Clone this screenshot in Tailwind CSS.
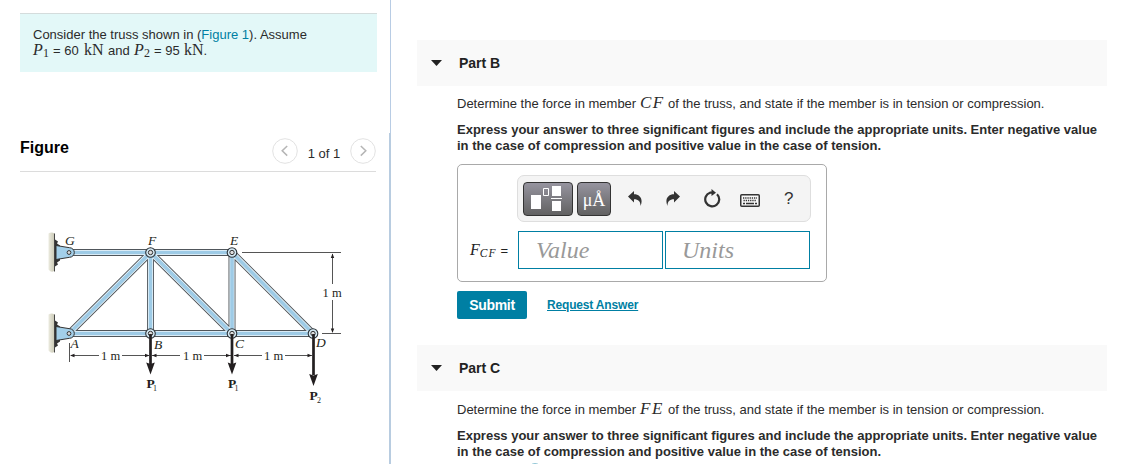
<!DOCTYPE html>
<html lang="en">
<head>
    <meta charset="UTF-8">
    <meta name="viewport" content="width=device-width, initial-scale=1.0">
    <title>Truss Problem</title>
    <script src="https://cdn.jsdelivr.net/npm/@tailwindcss/browser@4"></script>
</head>
<body class="bg-white w-[1130px] h-[464px] overflow-hidden flex font-['Liberation_Sans',Arial,sans-serif] text-[13px] leading-4 text-[#2b2b2b]">

    <!-- Left column -->
    <div class="w-[389px] shrink-0 pl-5 pt-[13px]">
        <div class="w-[357px] h-[59px] bg-[#e3f8f8] border-t border-[#d4dcdc] pl-[13px] pt-[13px] whitespace-nowrap">
            <p class="h-4">Consider the truss shown in (<a class="text-[#007fa3]">Figure 1</a>). Assume</p>
            <p class="h-4 -mt-px flex items-baseline leading-4"><span class="font-['Liberation_Serif',serif] italic text-[16px] w-[9px]">P</span><span class="font-['Liberation_Serif',serif] text-[12px] relative top-[2px] w-[11px] pl-[1px]">1</span><span class="w-[31px] whitespace-pre">= 60 </span><span class="font-['Liberation_Serif',serif] text-[16px] w-[24px]">kN</span><span class="w-[26px]">and</span><span class="font-['Liberation_Serif',serif] italic text-[16px] w-[9px]">P</span><span class="font-['Liberation_Serif',serif] text-[12px] relative top-[2px] w-[11px] pl-[1px]">2</span><span class="w-[30px] whitespace-pre">= 95 </span><span class="font-['Liberation_Serif',serif] text-[16px]">kN</span><span>.</span></p>
        </div>

        <div class="mt-[65px] w-[356px] h-[35px] border-b border-[#dcdcdc] flex justify-between">
            <h2 class="text-[16px] leading-5 font-bold text-black mt-px">Figure</h2>
            <div class="flex items-start mt-[1px]">
                <svg class="w-[26px] h-[26px]" viewBox="0 0 26 26" fill="none"><circle cx="13" cy="13" r="12.3" stroke="#e2e2e2"/><path d="M15.2 8l-5 4.8 5 4.8" stroke="#b5b5b5" stroke-width="1.5"/></svg>
                <span class="w-[52px] text-center mt-2">1 of 1</span>
                <svg class="w-[26px] h-[26px]" viewBox="0 0 26 26" fill="none"><circle cx="13" cy="13" r="12.3" stroke="#e2e2e2"/><path d="M10.8 8l5 4.8-5 4.8" stroke="#b5b5b5" stroke-width="1.5"/></svg>
            </div>
        </div>

        <!-- Truss diagram -->
        <svg class="mt-12 ml-5 w-[320px] h-[190px]" viewBox="40 220 320 190" font-family="Liberation Serif, serif" fill="#231f20">
            <defs>
                <linearGradient id="wall" x1="0" x2="1"><stop offset="0" stop-color="#ecebdf"/><stop offset="1" stop-color="#c9c8b5"/></linearGradient>
                <path id="members" d="M69 252.5H232M69 333.5H313M150.5 252.5V333.5M232 252.5V333.5M69 333.5L150.5 252.5L232 333.5M232 252.5L313 333.5"/>
                <g id="support">
                    <path d="M48.500 -19Q51.500 -21 54.500 -19V18Q51.500 21 48.500 17Z" fill="url(#wall)"/>
                    <path d="M54.500 -19V19" stroke="#444"/>
                    <path d="M55 -13L58 -11L57 -9L60 -7V8L57 10L58 12L55 14Z" fill="#333"/>
                    <path d="M56 -7L69.500 -4.800A4.800 4.800 0 0 1 69.500 4.800L56 7Z" fill="#a3cfe9" stroke="#333"/>
                </g>
                <g id="pin"><circle r="4.800" fill="#d5eaf5" stroke="#2d3338" stroke-width="1.100"/><circle r="2.200" fill="#ddd" stroke="#333"/></g>
            </defs>
            <use href="#members" fill="none" stroke="#50565b" stroke-width="7"/>
            <use href="#members" fill="none" stroke="#ecf6fb" stroke-width="5.200"/>
            <use href="#members" fill="none" stroke="#9ecbe6" stroke-width="3.600"/>
            <use href="#support" y="252.500"/>
            <use href="#support" y="333.500"/>
            <g fill="#ddd" stroke="#333"><circle cx="69" cy="252.500" r="1.900"/><circle cx="69" cy="333.500" r="1.900"/></g>
            <!-- dimension lines -->
            <g stroke="#555" fill="none">
                <path d="M69.500 343V362M242 252.500H341M322 333.500H341M332.500 254V284M332.500 300V332"/>
                <path d="M71 355.500H99M122 355.500H149M152 355.500H180M204 355.500H231M234 355.500H262M285 355.500H312"/>
            </g>
            <path d="M70 355.500l4.500-1.700v3.400zM149.500 355.500l-4.500-1.700v3.400zM152 355.500l4.500-1.700v3.400zM230.500 355.500l-4.500-1.700v3.400zM234 355.500l4.500-1.700v3.400zM312 355.500l-4.500-1.700v3.400zM332.500 253.500l-1.700 4.500h3.400zM332.500 333l-1.700-4.500h3.400z"/>
            <use href="#pin" x="150.500" y="252.500"/>
            <use href="#pin" x="232" y="252.500"/>
            <use href="#pin" x="150.500" y="333.500"/>
            <use href="#pin" x="232" y="333.500"/>
            <use href="#pin" x="313" y="333.500"/>
            <!-- loads -->
            <path d="M150.500 334V364M232 334V364M313.500 334V375" stroke="#231f20" stroke-width="2.700"/>
            <path d="M150.500 374.500l-4.300-12 4.300 1.500 4.300-1.500zM232 374.500l-4.300-12 4.300 1.500 4.300-1.500zM313.500 386l-4.300-12 4.300 1.500 4.300-1.500z"/>
            <g font-size="13.500" font-style="italic">
                <text x="65" y="244.500">G</text><text x="148" y="245">F</text><text x="230" y="245">E</text>
                <text x="70.500" y="347.500">A</text><text x="154" y="349">B</text><text x="235" y="347.500">C</text><text x="316" y="347">D</text>
            </g>
            <g font-size="12.500">
                <text x="101" y="360">1 m</text><text x="183" y="360">1 m</text><text x="264" y="360">1 m</text><text x="322.500" y="297">1 m</text>
            </g>
            <g font-size="13.500" font-weight="bold">
                <text x="146.500" y="387.500">P</text><text x="228" y="387.500">P</text><text x="309.500" y="399.500">P</text>
            </g>
            <g font-size="8"><text x="153" y="391">1</text><text x="234.500" y="391">1</text><text x="317" y="403">2</text></g>
        </svg>
    </div>

    <!-- Column divider -->
    <div class="w-[2px] shrink-0 flex flex-col items-end">
        <div class="w-px h-[133px] bg-[#b8cce4]"></div>
        <div class="w-[2px] flex-1 bg-[#b8cce0]"></div>
    </div>

    <!-- Right column -->
    <div class="ml-[26px] w-[690px] shrink-0 pt-10 whitespace-nowrap">
        <div class="h-[46px] bg-[#f9f9f9] flex items-center pl-[14px]">
            <svg class="w-[11px] h-[6px]" viewBox="0 0 11 6"><path d="M0 0h11L5.500 6z" fill="#222"/></svg>
            <h3 class="ml-[17px] text-[14px] font-bold text-[#222]">Part B</h3>
        </div>
        <div class="pl-10">
            <p class="mt-[9px] h-4 flex items-baseline"><span class="w-[183px]">Determine the force in member</span><span class="font-['Liberation_Serif',serif] italic text-[17px] tracking-[1.5px] w-[28px]">CF</span><span>of the truss, and state if the member is in tension or compression.</span></p>
            <p class="mt-[11px] font-bold">Express your answer to three significant figures and include the appropriate units. Enter negative value<br>in the case of compression and positive value in the case of tension.</p>

            <!-- Answer box -->
            <div class="mt-[10px] w-[370px] h-[118px] border border-[#a9a9a9] rounded-[5px] pt-[10px] pl-[10px]">
                <div class="ml-[49px] w-[294px] h-[47px] bg-[#f4f4f4] border border-[#dedede] rounded-[7px] flex items-center pl-[5px]">
                    <div class="w-[50px] h-[34px] rounded-[4px] border border-[#333] bg-linear-to-b from-[#96949f] to-[#626262]">
                        <svg class="w-12 h-8" viewBox="0 0 48 32"><path d="M7 12h10v14H7zM28 3h9v10h-9zM28 18h9v10h-9zM27 15h11v1h-11z" fill="#fff"/><path d="M19.500 5.500h5v7h-5z" fill="none" stroke="#fff"/></svg>
                    </div>
                    <div class="ml-1 w-[34px] h-[34px] rounded-[4px] border border-[#333] bg-linear-to-b from-[#96949f] to-[#626262] text-white text-center font-['Liberation_Serif',serif] text-[18px] leading-[34px]">μÅ</div>
                    <svg class="ml-[17px] w-[14px] h-[15px]" viewBox="0 0 14 15"><path d="M0 5.500L6 0V3.200C12 3.200 15.500 8 12.500 15C12.500 10.500 10.500 8.300 6 8.300V11.500z" fill="#333"/></svg>
                    <svg class="ml-[24px] w-[14px] h-[15px]" viewBox="0 0 14 15"><path d="M14 5.500L8 0V3.200C2 3.200 -1.500 8 1.500 15C1.500 10.500 3.500 8.300 8 8.300V11.500z" fill="#333"/></svg>
                    <svg class="ml-[23px] w-[18px] h-[19px]" viewBox="0 0 18 19"><path d="M14 5.200A7 7 0 1 1 7 3.700H10" fill="none" stroke="#333" stroke-width="2.200"/><path d="M8.500 0L13 3.700L8.500 7z" fill="#333"/></svg>
                    <svg class="ml-[19px] mt-[3px] w-5 h-[13px]" viewBox="0 0 20 13"><rect x=".75" y=".75" width="18.500" height="11.500" rx="1" fill="#f8f8f8" stroke="#333" stroke-width="1.500"/><path d="M3 4h14M3.500 6.500h13" stroke="#333" stroke-width="1.300" stroke-dasharray="1.300 .9"/><path d="M3 9.500h2M6 9.500h8M15 9.500h2" stroke="#333" stroke-width="1.300"/></svg>
                    <span class="ml-6 text-[17px] leading-5 text-[#333]">?</span>
                </div>
                <div class="mt-[9px] flex items-center text-[#222]">
                    <div class="w-[50px] pl-[2px] flex items-baseline font-['Liberation_Serif',serif] italic text-[16px]">F<span class="relative top-[2px] text-[11.500px] tracking-[1px]">CF</span><span class="ml-1 not-italic font-['Liberation_Sans',sans-serif] text-[13px]">=</span></div>
                    <div class="w-[145px] h-[38px] border border-[#007fa3] bg-white pl-[17px] font-['Liberation_Serif',serif] italic text-[24px] leading-[36px] text-[#999]">Value</div>
                    <div class="ml-[2px] w-[145px] h-[38px] border border-[#007fa3] bg-white pl-[16px] font-['Liberation_Serif',serif] italic text-[24px] leading-[36px] text-[#999]">Units</div>
                </div>
            </div>

            <div class="mt-[9px] h-7 flex items-center">
                <button class="w-[70px] h-7 rounded-[2px] bg-[#007fa3] text-white text-[14px] tracking-[-0.3px] font-bold">Submit</button>
                <a class="ml-5 text-[12px] font-bold text-[#007fa3] underline tracking-[-0.17px]">Request Answer</a>
            </div>
        </div>

        <div class="mt-[26px] h-[46px] bg-[#f9f9f9] flex items-center pl-[14px]">
            <svg class="w-[11px] h-[6px]" viewBox="0 0 11 6"><path d="M0 0h11L5.500 6z" fill="#222"/></svg>
            <h3 class="ml-[17px] text-[14px] font-bold text-[#222]">Part C</h3>
        </div>
        <div class="pl-10">
            <p class="mt-[10px] h-4 flex items-baseline"><span class="w-[183px]">Determine the force in member</span><span class="font-['Liberation_Serif',serif] italic text-[17px] tracking-[1.5px] w-[28px]">FE</span><span>of the truss, and state if the member is in tension or compression.</span></p>
            <p class="mt-[11px] font-bold">Express your answer to three significant figures and include the appropriate units. Enter negative value<br>in the case of compression and positive value in the case of tension.</p>
            <div class="mt-[3px] ml-[71px] w-[14px] h-[14px] rounded-full border border-[#8fc5d5]"></div>
        </div>
    </div>

</body>
</html>
